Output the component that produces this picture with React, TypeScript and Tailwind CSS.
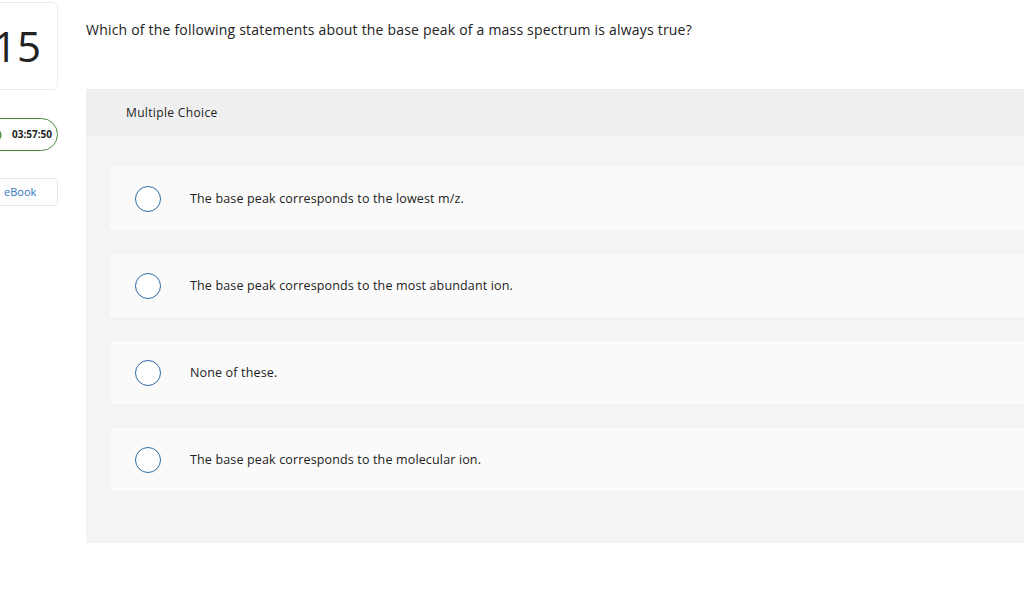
import { Clock } from "lucide-react";

const options = [
  "The base peak corresponds to the lowest m/z.",
  "The base peak corresponds to the most abundant ion.",
  "None of these.",
  "The base peak corresponds to the molecular ion.",
];

export default function App() {
  return (
    <div
      className="w-[1024px] h-[593px] overflow-hidden bg-white text-[#222]"
      style={{ fontFamily: "'Open Sans', Lato, sans-serif" }}
    >
      <div className="flex gap-[28px]">
        {/* Left rail */}
        <div className="flex flex-col w-[84px] -ml-[26px] shrink-0 pt-[2px]">
          <div className="h-[88px] rounded-[6px] border border-[#ebebeb] flex items-center justify-center pl-[2px]">
            <span className="text-[42px] leading-none text-[#222]">15</span>
          </div>
          <div className="mt-[28px] h-[33px] rounded-full border border-[#4c8c3f] flex items-center justify-end gap-[10px] pr-[5px]">
            <Clock className="w-[14px] h-[14px] text-[#4c8c3f]" strokeWidth={2.5} />
            <span className="text-[10px] font-bold text-[#222]">03:57:50</span>
          </div>
          <div className="mt-[27px] h-[28px] rounded-[4px] border border-[#e6e6e6] flex items-center pl-[29px]">
            <span className="text-[11px] text-[#2f74c0]">eBook</span>
          </div>
        </div>

        {/* Question */}
        <div className="flex-1 flex flex-col">
          <p className="mt-[21px] text-[14px] leading-[18px] tracking-[0.2px] text-[#222]">
            Which of the following statements about the base peak of a mass spectrum is always true?
          </p>
          <div className="mt-[50px] w-[1000px]">
            <div className="h-[47px] bg-[#efefef] flex items-center pl-[40px]">
              <span className="text-[12px] tracking-[0.35px] text-[#222]">Multiple Choice</span>
            </div>
            <div className="bg-[#f4f4f4] pl-[24px] pt-[31px] pb-[52px] flex flex-col gap-[24px]">
              {options.map((o) => (
                <div
                  key={o}
                  className="h-[63px] rounded-[4px] bg-[#fafafa] flex items-center pl-[25px]"
                >
                  <span className="w-[26px] h-[26px] rounded-full border-[1.5px] border-[#2d6aa3] bg-white shrink-0" />
                  <span className="ml-[29px] mt-[2px] text-[12.5px] tracking-[0.15px] text-[#222]">{o}</span>
                </div>
              ))}
            </div>
          </div>
        </div>
      </div>
    </div>
  );
}
